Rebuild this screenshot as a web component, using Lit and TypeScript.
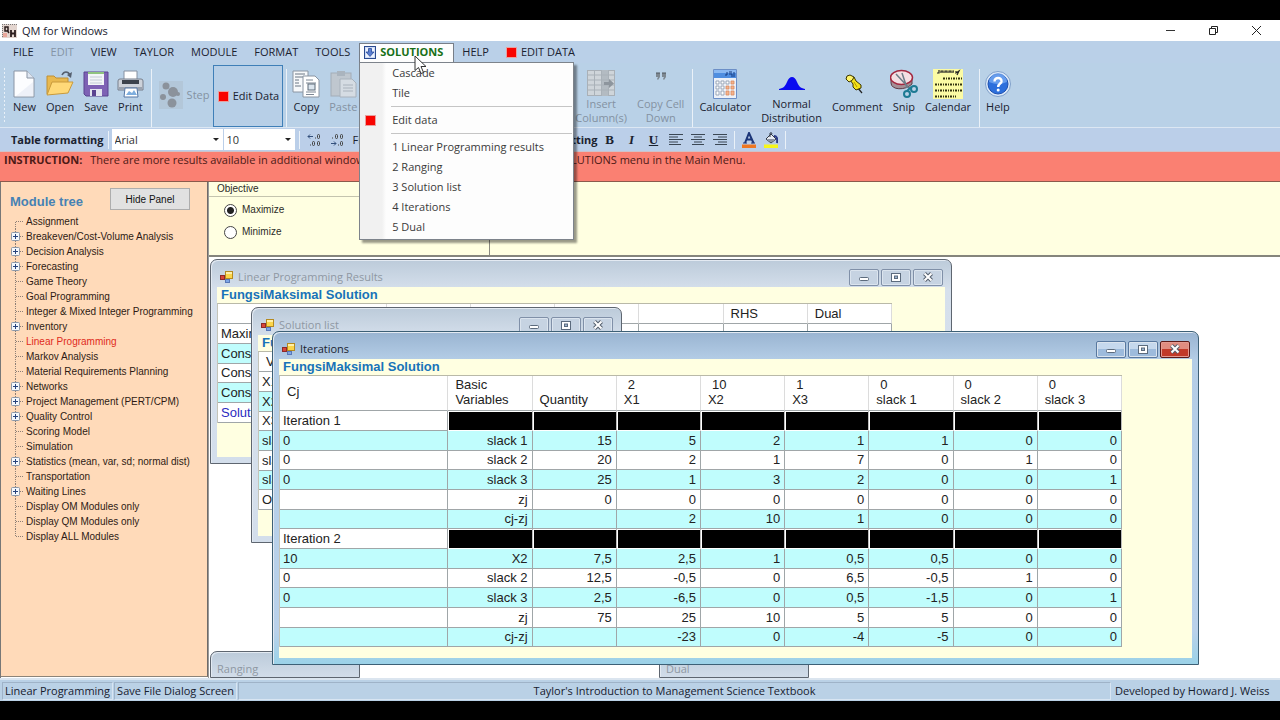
import { LitElement, html, svg, css, nothing } from "lit";
import { customElement, property } from "lit/decorators.js";
import { classMap } from "lit/directives/class-map.js";

const icons: Record<string, unknown> = {
  app: svg`<svg width="15" height="14" viewBox="0 0 15 14"><rect width="15" height="14" fill="#e3d5cf"/><path d="M0 .5h15M.5 0v14" stroke="#777" stroke-dasharray="1 1"/><path d="M3 3h3v4H3zM5 6l2 3" fill="none" stroke="#2b1d1d" stroke-width="1.5"/><path d="M9 6v7M13 6v7M9 9.500h4" stroke="#2b1d1d" stroke-width="1.8"/><path d="M1 9h4v4H1z" fill="#e8a79a"/></svg>`,
  sol: svg`<svg width="12" height="13" viewBox="0 0 12 13"><rect x=".5" y=".5" width="11" height="12" fill="#cfdcf5" stroke="#2a4a8f"/><path d="M2 2h8v9H2z" fill="#eef3fd"/><path d="M4.500 2.500h3v3.500H10L6 10.500 2 6h2.500z" fill="#5b7fd0" stroke="#274a9c" stroke-width=".8"/></svg>`,
  new: svg`<svg width="22" height="28" viewBox="0 0 22 28"><path d="M1 1h13l7 7v19H1z" fill="#fcfdff" stroke="#8a95a5"/><path d="M14 1v7h7" fill="#dfe7f2" stroke="#8a95a5"/><path d="M3 26h17V12z" fill="#e4eaf4" opacity=".6"/></svg>`,
  open: svg`<svg width="28" height="28" viewBox="0 0 28 28"><path d="M1 24V6h7l2 2h12v5" fill="#e9b94f" stroke="#bf8f35"/><path d="M1 25 6 12h21l-5 11z" fill="#ffd978" stroke="#c99a3c"/><path d="M16 5c2-4 6-4 8 0" fill="none" stroke="#555f6e" stroke-width="1.600"/><path d="m26 2-1 6-4-3z" fill="#555f6e"/></svg>`,
  save: svg`<svg width="26" height="26" viewBox="0 0 26 26"><path d="M1 1h24v24H3l-2-2z" fill="#7e62b4" stroke="#5b4490"/><path d="M5 1h16v13H5z" fill="#f3f6f8"/><path d="M5 1h16v2H5z" fill="#8fc47f"/><path d="M7 6h12M7 9h12M7 12h12" stroke="#c3ccd6"/><path d="M7 18h12v7H7z" fill="#e3e5ef"/><path d="M9 19h4v6H9z" fill="#5b4490"/></svg>`,
  print: svg`<svg width="27" height="28" viewBox="0 0 27 28"><path d="M7 1h13v10H7z" fill="#fff" stroke="#8590a0"/><path d="M1 11q0-2 2-2h21q2 0 2 2v9H1z" fill="#cdd2da" stroke="#777f8c"/><path d="M5 10h17v4H5z" fill="#3c424c"/><path d="M2 17h23v3H2z" fill="#9aa2af"/><path d="M8 18h12l1 9H7z" fill="#fff" stroke="#5577a5"/><path d="m9 25 3-4 3 2 2-3 3 5z" fill="#7eaede"/></svg>`,
  step: svg`<svg width="24" height="28" viewBox="0 0 24 28"><rect width="24" height="28" fill="#b3c7d9"/><g fill="#8b929b"><circle cx="7" cy="5" r="3.500"/><circle cx="14" cy="11" r="5"/><circle cx="4" cy="16" r="3"/><circle cx="13" cy="22" r="4.500"/><circle cx="19" cy="13" r="2"/></g></svg>`,
  red: svg`<svg width="11" height="11" viewBox="0 0 11 11"><rect x=".5" y=".5" width="10" height="10" fill="#f80400" stroke="#e8a09f"/></svg>`,
  copy: svg`<svg width="28" height="28" viewBox="0 0 28 28"><path d="M1 1h15v21H1z" fill="#f7f9fb" stroke="#8b95a2"/><path d="M3 4h10M3 7h10M3 10h4M3 13h4M3 16h6" stroke="#6b7684"/><path d="M11 6h12l4 4v17H11z" fill="#fff" stroke="#8b95a2"/><path d="M14 10h7M14 13h10M14 22h10M14 24.500h8" stroke="#7d8794"/><rect x="16" y="14" width="7" height="6" fill="#dbe5ee" stroke="#5d6a78"/></svg>`,
  paste: svg`<svg width="28" height="28" viewBox="0 0 28 28"><rect x="2" y="3" width="20" height="23" fill="#bfc7cf" stroke="#a3adb8"/><path d="M8 1h8v5H8z" fill="#aab4be"/><path d="M11 9h12l4 4v14H11z" fill="#d5dce3" stroke="#a9b2bc"/><path d="M14 15h10M14 18h10M14 21h10" stroke="#a9b2bc"/></svg>`,
  insert: svg`<svg width="28" height="26" viewBox="0 0 28 26"><rect x=".5" y=".5" width="27" height="25" fill="#cfd5da" stroke="#a9b0b7"/><path d="M15 0h6v26h-6z" fill="#b3bbc2"/><path d="M0 5h28M0 10h28M0 15h28M0 20h28M7.500 0v26M14.500 0v26M21.500 0v26" stroke="#a9b1b8"/><path d="M17 12h5V9l5 4.500-5 4.500v-3h-5z" fill="#8d959d"/></svg>`,
  copycell: svg`<svg width="28" height="26" viewBox="0 0 28 26"><path d="M9 3h4v4l-2 3-1-1 1-2H9zM15 3h4v4l-2 3-1-1 1-2h-2z" fill="#7d8790"/><path d="M9 3h4M15 3h4" stroke="#4e565e"/></svg>`,
  calc: svg`<svg width="24" height="30" viewBox="0 0 24 30"><path d="M.5.500h23v29H.5z" fill="#edf1f8" stroke="#6c8fc7"/><path d="M1 1h22v8H1z" fill="#4f8ee0"/><path d="M1 1h22v3H1z" fill="#8bb9f2"/><path d="M12 6h2V3M16 3h3M16 5h3v3M21 3v5" stroke="#173a80" fill="none"/><g fill="#fff" stroke="#8794a8" stroke-width=".8"><path d="M3 12h3v3H3zM8 12h3v3H8zM3 17h3v3H3zM8 17h3v3H8zM3 22h3v4H3zM8 22h3v4H8zM13 12h3v3h-3z"/></g><g fill="#f5b38c" stroke="#d98a60" stroke-width=".8"><path d="M18 12h3v3h-3zM13 17h3v3h-3zM18 17h3v3h-3zM13 22h3v4h-3zM18 22h3v4h-3z"/></g></svg>`,
  normal: svg`<svg width="28" height="26" viewBox="0 0 28 26"><path d="M1 20v-1c5-1 6-3 8-7q2-5 5-5t5 5c2 4 3 6 8 7v1z" fill="#0a0af0"/></svg>`,
  comment: svg`<svg width="28" height="28" viewBox="0 0 28 28"><path d="m14 17 5 6" stroke="#222" stroke-width="1.200"/><path d="m7 10 4-3 2 4 5 4v3l-5 2-3-3v-3z" fill="#f4e21a" stroke="#3b3500"/><path d="M3 9q0-4 4-4l4 2q-1 4-5 5z" fill="#fff46a" stroke="#3b3500"/><path d="m11 12 3 5" stroke="#b59c00"/></svg>`,
  snip: svg`<svg width="28" height="30" viewBox="0 0 28 30"><path d="M1 9v5c0 7 14 8 21 1V8z" fill="#a58f96" stroke="#5d3b45"/><ellipse cx="11.500" cy="8.500" rx="11" ry="7" fill="#f4dfe3" stroke="#a32840" stroke-width="1.500"/><path d="m6 5 13 14M12 4l5 15" stroke="#6d7d88" stroke-width="1.500"/><circle cx="17" cy="25" r="3" fill="none" stroke="#1d7a93" stroke-width="2"/><circle cx="24" cy="20" r="3" fill="none" stroke="#1d7a93" stroke-width="2"/><path d="m17 22 4-4" stroke="#1d7a93" stroke-width="2"/></svg>`,
  calendar: svg`<svg width="30" height="30" viewBox="0 0 30 30"><path d="M0 0h30v30H0z" fill="#fbfba4"/><path d="M6 1v3H4M8 4V2h2v2M12 4V2h2v2M16 4V2h2v2M20 4V2h1M23 2v2l3-2-2 4" fill="none" stroke="#222" stroke-width="1.200"/><path d="M10 9.500h19M2 15.500h27M2 21.500h27M2 27.500h21" stroke="#33330f" stroke-width="2" stroke-dasharray="2 1 1 1"/></svg>`,
  help: svg`<svg width="26" height="26" viewBox="0 0 26 26"><circle cx="13" cy="13" r="12.500" fill="#dbe8f8" stroke="#7f9fc9"/><circle cx="13" cy="13" r="10" fill="#2c6fdc" stroke="#1b4fae"/><path d="M4 11a9 9 0 0 1 18 0q-9 4-18 0z" fill="#7fb0f5" opacity=".7"/><path d="M9.500 10.500c0-5 7.500-4.500 7 0-.3 2.200-3.300 2-3.300 5.500" fill="none" stroke="#fff" stroke-width="2.400"/><circle cx="13.200" cy="19" r="1.500" fill="#fff"/></svg>`,
  decL: svg`<svg width="15" height="14" viewBox="0 0 15 14"><path d="M1 3.500h5M3 1.500l-2 2 2 2" stroke="#33507c" fill="none"/><rect x="10.500" y="1.500" width="2" height="4" rx="1" fill="none" stroke="#444"/><rect x="5.500" y="8.500" width="2" height="4" rx="1" fill="none" stroke="#444"/><rect x="10.500" y="8.500" width="2" height="4" rx="1" fill="none" stroke="#444"/><path d="M8 5h1M3 12h1" stroke="#444"/></svg>`,
  decR: svg`<svg width="15" height="14" viewBox="0 0 15 14"><path d="M1 10.500h5M4 8.500l2 2-2 2" stroke="#33507c" fill="none"/><rect x="10.500" y="8.500" width="2" height="4" rx="1" fill="none" stroke="#444"/><rect x="5.500" y="1.500" width="2" height="4" rx="1" fill="none" stroke="#444"/><rect x="10.500" y="1.500" width="2" height="4" rx="1" fill="none" stroke="#444"/><path d="M8 12h1M2 5h1" stroke="#444"/></svg>`,
  left: svg`<svg width="14" height="12" viewBox="0 0 14 12"><path d="M0 .5h14M0 3h9M0 5.500h14M0 8h9M0 10.500h12" stroke="#3b4754"/></svg>`,
  center: svg`<svg width="14" height="12" viewBox="0 0 14 12"><path d="M0 .5h14M3 3h8M0 5.500h14M3 8h8M1 10.500h12" stroke="#3b4754"/></svg>`,
  right: svg`<svg width="14" height="12" viewBox="0 0 14 12"><path d="M0 .5h14M5 3h9M0 5.500h14M5 8h9M2 10.500h12" stroke="#3b4754"/></svg>`,
  fore: svg`<svg width="14" height="16" viewBox="0 0 14 16"><path d="M3 11 7 1l4.500 10M4.500 7.500h5" fill="none" stroke="#1c3578" stroke-width="2"/><path d="M1 11h4M9 11h4" stroke="#1c3578"/><path d="M0 12.500h14V16H0z" fill="#ee7722"/></svg>`,
  fill: svg`<svg width="14" height="16" viewBox="0 0 14 16"><path d="m2 7 5-5 5 5-5 4z" fill="#e9edf4" stroke="#333b48"/><path d="M3 7h8l-4 3.500z" fill="#8a93a2"/><path d="M6 5V1q2-1 2 1" fill="none" stroke="#333b48"/><path d="M10 4q4 0 3 7" fill="none" stroke="#2b3a86" stroke-width="2"/><path d="M0 12.500h14V16H0z" fill="#f6f61c"/></svg>`,
  form: svg`<svg width="13" height="12" viewBox="0 0 13 12"><rect x=".5" y="4.500" width="4" height="4" fill="#d9453a" stroke="#8c2a2a"/><rect x="5.500" y=".5" width="7" height="7" fill="#fbd54a" stroke="#b58a20"/><path d="M6 1h6v2H6z" fill="#fff0a8"/><rect x="5.500" y="8.500" width="4" height="3" fill="#7ea6e6" stroke="#5878b8"/></svg>`,
  wmin: svg`<svg width="12" height="10" viewBox="0 0 12 10"><rect x="1.500" y="5.500" width="9" height="3" rx="1" fill="#fff" stroke="#5c6b7d"/></svg>`,
  wmax: svg`<svg width="12" height="10" viewBox="0 0 12 10"><rect x="1.500" y="1.500" width="9" height="8" fill="#fff" stroke="#5c6b7d"/><rect x="4.500" y="4" width="3" height="2.500" fill="#9db4d0" stroke="#5c6b7d"/></svg>`,
  wclose: svg`<svg width="12" height="10" viewBox="0 0 12 10"><path d="m2.500 1.500 7 7M9.500 1.500l-7 7" stroke="#56606e" stroke-width="4"/><path d="m2.500 1.500 7 7M9.500 1.500l-7 7" stroke="#fff" stroke-width="2"/></svg>`,
  cursor: svg`<svg width="14" height="20" viewBox="0 0 14 20"><path d="M1 1v14.500l3.500-3 2.500 6 2.500-1-2.500-6h5z" fill="#fff" stroke="#333"/></svg>`,
};

interface Tool {
  icon: string;
  label: string;
  off?: boolean;
  lines?: boolean;
}

const fileTools: Tool[] = [
  { icon: "new", label: "New" },
  { icon: "open", label: "Open" },
  { icon: "save", label: "Save" },
  { icon: "print", label: "Print" },
];
const copyTools: Tool[] = [
  { icon: "copy", label: "Copy" },
  { icon: "paste", label: "Paste", off: true },
];
const tableTools: Tool[] = [
  { icon: "insert", label: "Insert\nColumn(s)", off: true, lines: true },
  { icon: "copycell", label: "Copy Cell\nDown", off: true, lines: true },
];
const extraTools: Tool[] = [
  { icon: "calc", label: "Calculator" },
  { icon: "normal", label: "Normal\nDistribution", lines: true },
  { icon: "comment", label: "Comment" },
  { icon: "snip", label: "Snip" },
  { icon: "calendar", label: "Calendar" },
];

const modules: [string, boolean][] = [
  ["Assignment", false],
  ["Breakeven/Cost-Volume Analysis", true],
  ["Decision Analysis", true],
  ["Forecasting", true],
  ["Game Theory", false],
  ["Goal Programming", false],
  ["Integer & Mixed Integer Programming", false],
  ["Inventory", true],
  ["Linear Programming", false],
  ["Markov Analysis", false],
  ["Material Requirements Planning", false],
  ["Networks", true],
  ["Project Management (PERT/CPM)", true],
  ["Quality Control", true],
  ["Scoring Model", false],
  ["Simulation", false],
  ["Statistics (mean, var, sd; normal dist)", true],
  ["Transportation", false],
  ["Waiting Lines", true],
  ["Display OM Modules only", false],
  ["Display QM Modules only", false],
  ["Display ALL Modules", false],
];

const iterations: string[][] = [
  ["Iteration 1"],
  ["0", "slack 1", "15", "5", "2", "1", "1", "0", "0"],
  ["0", "slack 2", "20", "2", "1", "7", "0", "1", "0"],
  ["0", "slack 3", "25", "1", "3", "2", "0", "0", "1"],
  ["", "zj", "0", "0", "0", "0", "0", "0", "0"],
  ["", "cj-zj", "", "2", "10", "1", "0", "0", "0"],
  ["Iteration 2"],
  ["10", "X2", "7,5", "2,5", "1", "0,5", "0,5", "0", "0"],
  ["0", "slack 2", "12,5", "-0,5", "0", "6,5", "-0,5", "1", "0"],
  ["0", "slack 3", "2,5", "-6,5", "0", "0,5", "-1,5", "0", "1"],
  ["", "zj", "75", "25", "10", "5", "5", "0", "0"],
  ["", "cj-zj", "", "-23", "0", "-4", "-5", "0", "0"],
];

const iterationHeads: [string, string][] = [
  ["2", "X1"],
  ["10", "X2"],
  ["1", "X3"],
  ["0", "slack 1"],
  ["0", "slack 2"],
  ["0", "slack 3"],
];

const gridStyles = css`
  table {
    border-spacing: 0;
    table-layout: fixed;
    width: 100%;
    font-size: 13px;
    line-height: 18px;
    color: #222;
    background: #fff;
    border-top: 1px solid #b9b9a8;
    border-left: 1px solid #c4c4b8;
    box-sizing: border-box;
  }
  th,
  td {
    box-sizing: border-box;
    padding: 0 4px 0 3px;
    height: 20px;
    font-weight: 400;
    text-align: right;
    white-space: nowrap;
    border-right: 1px solid #a0a6a8;
    border-bottom: 1px solid #a0a6a8;
    overflow: hidden;
  }
  tbody tr:nth-child(3n) > * {
    height: 19px;
  }
  thead th {
    text-align: left;
    padding: 0 7px;
    border-right-color: #dcdcdc;
  }
  tbody th {
    text-align: left;
  }
  tbody tr.tint > * {
    background: #c0fdfd;
  }
  .first {
    width: 20%;
  }
`;

@customElement("mdi-window")
export class MdiWindow extends LitElement {
  @property() caption = "";
  @property({ type: Boolean, reflect: true }) active = false;
  @property({ type: Boolean, reflect: true }) collapsed = false;

  static styles = css`
    :host {
      display: flex;
      flex-direction: column;
      box-sizing: border-box;
      border: 1px solid #5e6670;
      border-radius: 7px 7px 0 0;
      padding: 0 6px 6px;
      background: linear-gradient(#bccbda, #d6e0ec 30px, #d3deeb);
      overflow: hidden;
      box-shadow: inset 1px 1px 0 #e3eaf2;
    }
    :host([active]) {
      border-color: #3d6076;
      background: linear-gradient(#99b4d1, #b4cde6 28px, #b9d1ea 90%, #9bd2e8);
    }
    .bar {
      display: flex;
      align-items: center;
      flex: 0 0 27px;
      gap: 5px;
      padding: 7px 2px 0 3px;
      box-sizing: border-box;
      font: 11px/16px "Open Sans", sans-serif;
      color: #8f98a3;
    }
    :host([active]) .bar {
      color: #1b2430;
    }
    :host([collapsed]) .bar {
      padding-left: 0;
    }
    .name {
      flex: 1;
    }
    .controls {
      display: flex;
      gap: 2px;
    }
    button {
      display: grid;
      place-items: center;
      width: 30px;
      height: 17px;
      padding: 0;
      border: 1px solid #8090a8;
      border-radius: 2px;
      background: #c6d3e2;
      box-shadow: inset 0 0 0 1px #dbe4ee;
    }
    :host([active]) button {
      border-color: #58789f;
      background: linear-gradient(#c5d8ed 50%, #9dbbdc 50%);
    }
    :host([active]) .close {
      border-color: #5c1a18;
      background: linear-gradient(#e08c80 50%, #c23a28 50%);
      box-shadow: inset 0 0 0 1px #e49a90;
    }
    .body {
      flex: 1;
      min-height: 0;
      overflow: hidden;
      background: #ffffe1;
    }
  `;

  render() {
    return html`
      <div class="bar">
        ${this.collapsed ? nothing : icons.form}
        <span class="name">${this.caption}</span>
        ${this.collapsed
          ? nothing
          : html`<span class="controls">
              <button aria-label="Minimize">${icons.wmin}</button>
              <button aria-label="Maximize">${icons.wmax}</button>
              <button class="close" aria-label="Close">${icons.wclose}</button>
            </span>`}
      </div>
      ${this.collapsed ? nothing : html`<div class="body"><slot></slot></div>`}
    `;
  }
}

@customElement("module-tree")
export class ModuleTree extends LitElement {
  static styles = css`
    :host {
      display: block;
      padding: 6px 17px 6px 8px;
      font: 10px/15px "Liberation Sans", sans-serif;
    }
    .head {
      display: flex;
      justify-content: space-between;
      align-items: center;
    }
    h2 {
      margin: 4px 0 0 1px;
      font-size: 13px;
      font-weight: 700;
      color: #4682b4;
    }
    .hide {
      width: 80px;
      height: 22px;
      padding: 0;
      border: 1px solid #adadad;
      background: #e1e1e1;
      color: #111;
      font: inherit;
    }
    ul {
      list-style: none;
      margin: 4px 0 0;
      padding: 0;
    }
    li {
      display: flex;
      height: 15px;
      white-space: nowrap;
    }
    svg {
      flex: none;
      margin-right: 2px;
    }
    a {
      color: #2e1a14;
      text-decoration: none;
    }
    .current {
      color: #e02a20;
    }
  `;

  render() {
    return html`
      <div class="head">
        <h2>Module tree</h2>
        <button class="hide">Hide Panel</button>
      </div>
      <ul>
        ${modules.map(([name, parent], i) => {
          const top = i === 0 ? 8 : 0;
          const end = i === modules.length - 1 ? 8 : 15;
          return html`<li>
            <svg width="15" height="15" viewBox="0 0 15 15">
              <path d="M6.500 ${top}V${end}M7 7.500h8" stroke="#8d7f76" stroke-dasharray="1 1" />
              ${parent
                ? svg`<rect x="2.500" y="3.500" width="8" height="8" rx="1" fill="#f4f7fb" stroke="#8c98a8"/><path d="M4 7.500h5M6.500 5v5" stroke="#26427c"/>`
                : nothing}
            </svg>
            <a href="#" class=${classMap({ current: name === "Linear Programming" })}>${name}</a>
          </li>`;
        })}
      </ul>
    `;
  }
}

@customElement("iterations-grid")
export class IterationsGrid extends LitElement {
  static styles = [
    gridStyles,
    css`
      :host {
        display: block;
        width: 843px;
      }
      thead th {
        height: 35px;
        line-height: 15px;
        vertical-align: bottom;
        padding-bottom: 3px;
      }
      thead .first {
        vertical-align: middle;
      }
      .cost {
        padding-left: 4px;
      }
      .band {
        background: #000;
        border-bottom-color: #fff;
        border-right-color: #bbb;
        box-shadow: inset 1px 1px 0 #fff;
      }
    `,
  ];

  render() {
    return html`<table>
      <thead>
        <tr>
          <th class="first">Cj</th>
          <th>Basic<br />Variables</th>
          <th>Quantity</th>
          ${iterationHeads.map(([cost, name]) => html`<th><span class="cost">${cost}</span><br />${name}</th>`)}
        </tr>
      </thead>
      <tbody>
        ${iterations.map(
          (row, i) => html`<tr class=${i % 2 ? "tint" : ""}>
            <th>${row[0]}</th>
            ${row.length === 1
              ? Array.from({ length: 8 }, () => html`<td class="band"></td>`)
              : row.slice(1).map((v) => html`<td>${v}</td>`)}
          </tr>`,
        )}
      </tbody>
    </table>`;
  }
}

@customElement("app-root")
export class AppRoot extends LitElement {
  static styles = [
    gridStyles,
    css`
      :host {
        display: flex;
        flex-direction: column;
        box-sizing: border-box;
        height: 100vh;
        padding: 20px 0 19px;
        background: #000;
        font: 11px/16px "Open Sans", sans-serif;
        color: #1a2230;
        overflow: hidden;
      }
      button {
        font: inherit;
        color: inherit;
        background: none;
        border: 0;
        padding: 0;
      }
      .title {
        display: flex;
        align-items: center;
        height: 21px;
        flex: none;
        gap: 5px;
        padding: 0 17px 0 2px;
        background: #fff;
      }
      .title .name {
        flex: 1;
        font-size: 11px;
      }
      .title button {
        display: grid;
        width: 13px;
        place-items: center;
        margin-left: 25px;
      }
      .menu {
        display: flex;
        flex: none;
        height: 22px;
        padding-left: 5px;
        background: #bad0e8;
      }
      .menu > button,
      .solutions > button {
        display: flex;
        align-items: center;
        gap: 4px;
        height: 22px;
        padding: 0 9px 0 8px;
      }
      .off {
        color: #8594a5;
      }
      .solutions {
        position: relative;
      }
      .solutions > button {
        box-sizing: border-box;
        margin-top: 2px;
        height: 20px;
        padding: 0 10px 3px 4px;
        background: #fdfdfd;
        border: 1px solid #777e88;
        border-bottom: 0;
        color: #187018;
        font-weight: 700;
      }
      .drop {
        position: absolute;
        z-index: 10;
        top: 21px;
        left: 0;
        width: 215px;
        box-sizing: border-box;
        padding: 0 1px 2px;
        border: 1px solid #7d838b;
        background: linear-gradient(90deg, #f1f1f1 22px, #fdfdfd 26px);
        box-shadow: 3px 3px 2px #0006;
      }
      .drop button {
        display: flex;
        align-items: center;
        width: 100%;
        height: 20px;
        padding-left: 4px;
        gap: 16px;
        color: #3a3a3a;
      }
      .drop .mark {
        width: 11px;
        height: 11px;
        display: flex;
      }
      .drop hr {
        margin: 3px 0 3px 30px;
        border: 0;
        border-top: 1px solid #c5c5c5;
      }
      .cursor {
        position: absolute;
        z-index: 11;
        top: 14px;
        left: 55px;
      }
      .toolbar {
        display: flex;
        flex: none;
        height: 64px;
        padding-left: 3px;
        background: #b9d1e7;
        border-bottom: 1px solid #dce7f3;
      }
      .grip {
        width: 3px;
        flex: none;
        margin: 4px 2px 4px 0;
        background: radial-gradient(circle, #e8f0f8 1px, transparent 1px) 0 0 / 3px 4px;
      }
      .tool {
        padding: 6px 5px 0;
        line-height: 15px;
        flex: none;
        align-self: flex-start;
      }
      .tool .pic {
        display: grid;
        place-items: center;
        height: 30px;
        margin: 0 -5px;
      }
      .tool .text {
        display: block;
        white-space: pre-line;
        text-align: center;
      }
      .tool.lines {
        line-height: 14px;
      }
      .tool.lines .pic {
        height: 28px;
      }
      .tool.off .text,
      .step {
        color: #8492a2;
      }
      .sep {
        flex: none;
        width: 1px;
        margin: 6px 1px 0 3px;
        background: #eaf1f8;
      }
      .wide {
        display: flex;
        align-items: center;
        gap: 4px;
        flex: none;
      }
      .step {
        margin: 0 4px 0 6px;
      }
      .edit {
        box-sizing: border-box;
        width: 70px;
        justify-content: center;
        margin: 2px 0 0;
        border: 1px solid #3f7fb8;
        background: #b7cfe7;
      }
      .covered {
        flex: none;
        width: 208px;
      }
      .format {
        display: flex;
        flex: none;
        align-items: center;
        height: 23px;
        padding-left: 3px;
        background: #bbcfe9;
      }
      .format .sep {
        height: 18px;
        margin: 0 3px;
      }
      .format b {
        margin: 0 1px 0 3px;
      }
      .combo {
        position: relative;
        display: flex;
        height: 21px;
        margin-right: 1px;
        background: #fff;
      }
      .combo::after {
        content: "";
        position: absolute;
        right: 4px;
        top: 9px;
        border: 3px solid transparent;
        border-top-color: #222;
        pointer-events: none;
      }
      select {
        appearance: none;
        width: 111px;
        border: 0;
        background: none;
        padding: 0 3px;
        font: inherit;
        color: #333;
      }
      .size select {
        width: 71px;
      }
      .set {
        display: flex;
        align-items: center;
        gap: 8px;
        margin: 0 4px;
        white-space: nowrap;
      }
      .set button {
        display: grid;
        place-items: center;
        min-width: 14px;
      }
      .fixed {
        width: 201px;
      }
      .style button {
        font: 700 13px/16px "Liberation Serif", serif;
      }
      .style .i {
        font-style: italic;
      }
      .style .u {
        text-decoration: underline;
      }
      .instruction {
        flex: none;
        height: 31px;
        box-sizing: border-box;
        padding: 0 4px;
        background: #fa8072;
        border-bottom: 1px solid #8b5a4c;
        border-top: 1px solid #cfc2c8;
        color: #4d1a16;
        white-space: nowrap;
      }
      .instruction b {
        margin-right: 5px;
      }
      .main {
        display: grid;
        grid-template-columns: 207px minmax(0, 1fr);
        flex: 1;
        min-height: 0;
        background: #fff;
        border-left: 1px solid #777;
      }
      .side {
        background: #ffdab9;
        border-right: 1px solid #6e6a68;
        border-bottom: 1px solid #8c8378;
        margin-bottom: 1px;
      }
      .work {
        display: flex;
        flex-direction: column;
        min-width: 0;
        border-left: 1px solid #999;
      }
      .options {
        flex: none;
        height: 75px;
        box-sizing: border-box;
        background: #ffffe1;
        border-bottom: 2px solid #85857c;
      }
      fieldset {
        box-sizing: border-box;
        margin: 0;
        width: 281px;
        height: 100%;
        border: 0;
        border-right: 1px solid #8a8a80;
        padding: 0;
        font: 10px/14px "Liberation Sans", sans-serif;
        color: #2c2c28;
      }
      legend {
        width: 100%;
        box-sizing: border-box;
        padding: 0 8px;
        border-bottom: 1px solid #c4c4ae;
      }
      .choice {
        display: flex;
        align-items: center;
        gap: 5px;
        padding: 4px 15px;
      }
      .choice:first-of-type {
        padding-top: 6px;
      }
      .choice input {
        appearance: none;
        width: 13px;
        height: 13px;
        margin: 0;
        border: 1px solid #444;
        border-radius: 50%;
        background: #fff;
      }
      .choice input:checked {
        background: radial-gradient(circle, #222 3px, #fff 4px);
      }
      .canvas {
        position: relative;
        flex: 1;
        min-height: 0;
        overflow: hidden;
        background: #fff;
        font-family: "Liberation Sans", sans-serif;
      }
      mdi-window {
        position: absolute;
      }
      .results {
        left: 1px;
        top: 2px;
        width: 742px;
        height: 205px;
      }
      .list {
        left: 42px;
        top: 50px;
        width: 371px;
        height: 236px;
      }
      .iter {
        left: 63px;
        top: 74px;
        width: 927px;
        height: 334px;
      }
      .ranging,
      .dual {
        left: 1px;
        top: 394px;
        width: 150px;
        height: 27px;
      }
      .dual {
        left: 450px;
      }
      h3 {
        margin: 0;
        padding: 0 4px;
        font: 700 13px/16px "Liberation Sans", sans-serif;
        color: #1873b9;
      }
      .results .grid {
        width: 675px;
      }
      .results .first {
        width: 25%;
      }
      .answer {
        color: #2a2ac0;
      }
      .status {
        display: flex;
        flex: none;
        align-items: center;
        height: 23px;
        box-sizing: border-box;
        gap: 1px;
        padding: 0 2px;
        background: #bad1e6;
        border-top: 2px solid #dbe5ef;
        color: #16202e;
      }
      .status span {
        padding: 0 2px;
        border: 1px solid #d8e5f2;
        border-top-color: #9fb3c8;
        border-left-color: #9fb3c8;
      }
      .status .book {
        flex: 1;
        text-align: center;
      }
      .status .author {
        width: 160px;
        border-color: transparent;
      }
    `,
  ];

  private tool(t: Tool) {
    return html`<button class=${classMap({ tool: true, off: !!t.off, lines: !!t.lines })} ?disabled=${!!t.off}>
      <span class="pic">${icons[t.icon]}</span><span class="text">${t.label}</span>
    </button>`;
  }

  private entry(label: string, icon?: string) {
    return html`<button><span class="mark">${icon ? icons[icon] : nothing}</span>${label}</button>`;
  }

  private row(label: string, i: number, cells: number) {
    return html`<tr class=${i % 2 ? "tint" : ""}>
      <th class=${label.startsWith("Solution") ? "answer" : ""}>${label}</th>
      ${Array.from({ length: cells }, () => html`<td></td>`)}
    </tr>`;
  }

  render() {
    return html`
      <header class="title">
        ${icons.app}<span class="name">QM for Windows</span>
        <button aria-label="Minimize"><svg width="11" height="11"><path d="M1 5.500h9" stroke="#333" /></svg></button>
        <button aria-label="Restore">
          <svg width="11" height="11"><path d="M1.500 3.500h6v6h-6zM3.500 3V1.500h6v6H8" fill="none" stroke="#222" /></svg>
        </button>
        <button aria-label="Close">
          <svg width="11" height="11"><path d="m1 1 9 9M10 1l-9 9" stroke="#222" /></svg>
        </button>
      </header>

      <nav class="menu">
        <button>FILE</button>
        <button class="off" disabled>EDIT</button>
        <button>VIEW</button>
        <button>TAYLOR</button>
        <button>MODULE</button>
        <button>FORMAT</button>
        <button>TOOLS</button>
        <div class="solutions">
          <button>${icons.sol}SOLUTIONS</button>
          <div class="drop">
            ${this.entry("Cascade")} ${this.entry("Tile")}
            <hr />
            ${this.entry("Edit data", "red")}
            <hr />
            ${this.entry("1 Linear Programming results")} ${this.entry("2 Ranging")} ${this.entry("3 Solution list")}
            ${this.entry("4 Iterations")} ${this.entry("5 Dual")}
          </div>
          <span class="cursor">${icons.cursor}</span>
        </div>
        <button>HELP</button>
        <button>${icons.red}EDIT DATA</button>
      </nav>

      <div class="toolbar">
        <i class="grip"></i>
        ${fileTools.map((t) => this.tool(t))}
        <i class="sep"></i>
        <button class="wide step" disabled>${icons.step}Step</button>
        <button class="wide edit">${icons.red}Edit Data</button>
        <i class="sep"></i>
        ${copyTools.map((t) => this.tool(t))}
        <i class="covered"></i>
        ${tableTools.map((t) => this.tool(t))}
        <i class="sep"></i>
        ${extraTools.map((t) => this.tool(t))}
        <i class="sep"></i>
        ${this.tool({ icon: "help", label: "Help" })}
      </div>

      <div class="format">
        <i class="grip"></i>
        <b>Table formatting</b>
        <i class="sep"></i>
        <span class="combo"><select aria-label="Font"><option>Arial</option></select></span>
        <span class="combo size"><select aria-label="Font size"><option>10</option></select></span>
        <i class="sep"></i>
        <span class="set fixed">
          <button aria-label="Increase decimals">${icons.decL}</button>
          <button aria-label="Decrease decimals">${icons.decR}</button>
          <button>Fix Dec</button>
        </span>
        <b>Cell formatting</b>
        <span class="set style"><button>B</button><button class="i">I</button><button class="u">U</button></span>
        <span class="set">
          <button aria-label="Align left">${icons.left}</button>
          <button aria-label="Align center">${icons.center}</button>
          <button aria-label="Align right">${icons.right}</button>
        </span>
        <i class="sep"></i>
        <span class="set">
          <button aria-label="Text color">${icons.fore}</button>
          <button aria-label="Fill color">${icons.fill}</button>
        </span>
        <i class="sep"></i>
      </div>

      <div class="instruction">
        <b>INSTRUCTION:</b> There are more results available in additional windows. These may be opened by using the
        SOLUTIONS menu in the Main Menu.
      </div>

      <main class="main">
        <aside class="side"><module-tree></module-tree></aside>
        <section class="work">
          <div class="options">
            <fieldset>
              <legend>Objective</legend>
              <label class="choice"><input type="radio" name="goal" checked />Maximize</label>
              <label class="choice"><input type="radio" name="goal" />Minimize</label>
            </fieldset>
          </div>
          <div class="canvas">
            <mdi-window class="results" caption="Linear Programming Results">
              <h3>FungsiMaksimal Solution</h3>
              <div class="grid">
                <table>
                  <thead>
                    <tr>
                      <th class="first"></th>
                      <th></th><th></th><th></th><th></th><th>RHS</th><th>Dual</th>
                    </tr>
                  </thead>
                  <tbody>
                    ${["Maximize", "Constraint 1", "Constraint 2", "Constraint 3", "Solution->"].map((l, i) =>
                      this.row(l, i, 6),
                    )}
                  </tbody>
                </table>
              </div>
            </mdi-window>
            <mdi-window class="list" caption="Solution list">
              <h3>FungsiMaksimal Solution</h3>
              <table>
                <thead>
                  <tr><th>Variable</th><th></th><th></th></tr>
                </thead>
                <tbody>
                  ${["X1", "X2", "X3", "slack 1", "slack 2", "slack 3", "Optimal Value (Z)"].map((l, i) =>
                    this.row(l, i, 2),
                  )}
                </tbody>
              </table>
            </mdi-window>
            <mdi-window class="ranging" caption="Ranging" collapsed></mdi-window>
            <mdi-window class="dual" caption="Dual" collapsed></mdi-window>
            <mdi-window class="iter" caption="Iterations" active>
              <h3>FungsiMaksimal Solution</h3>
              <iterations-grid></iterations-grid>
            </mdi-window>
          </div>
        </section>
      </main>

      <footer class="status">
        <span>Linear Programming</span>
        <span>Save File Dialog Screen</span>
        <span class="book">Taylor's Introduction to Management Science Textbook</span>
        <span class="author">Developed by Howard J. Weiss</span>
      </footer>
    `;
  }
}
